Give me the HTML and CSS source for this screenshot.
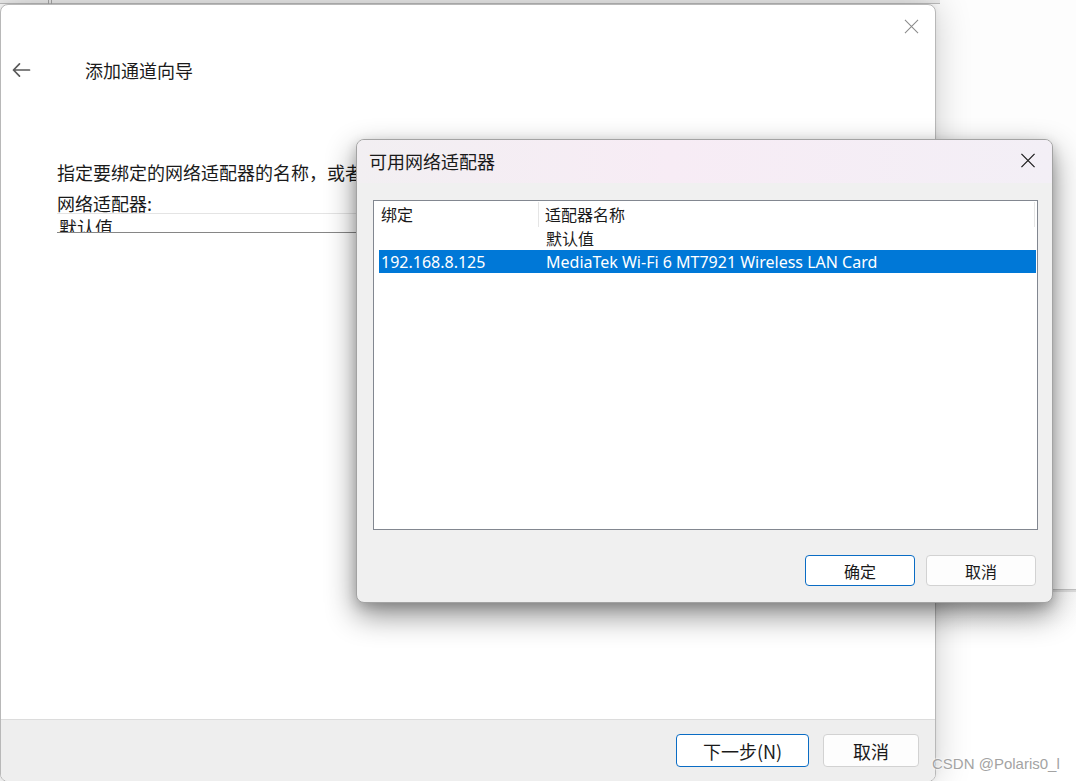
FILE: index.html
```html
<!DOCTYPE html>
<html lang="zh-CN">
<head>
<meta charset="utf-8">
<title>添加通道向导</title>
<link rel="stylesheet" href="styles.css">
</head>
<body>
<div class="desktop">
  <div class="bg-window-top"><span class="bg-tick"></span></div>
  <div class="bg-window-right"></div>

  <section class="wizard">
    <div class="wiz-titlebar">
      <button class="wiz-close" aria-label="关闭">
        <svg width="16" height="16" viewBox="0 0 16 16"><path d="M1 1L15 15M15 1L1 15" stroke="#8a8a8a" stroke-width="1.1" fill="none"/></svg>
      </button>
    </div>
    <div class="wiz-header">
      <span class="wiz-back">
        <svg width="20" height="16" viewBox="0 0 20 16"><path d="M8.5 1.8L2.5 8L8.5 14.2M2.5 8H18.5" stroke="#5a5a5a" stroke-width="1.7" fill="none" stroke-linejoin="round" stroke-linecap="round"/></svg>
      </span>
      <h1 class="wiz-title">添加通道向导</h1>
    </div>
    <div class="wiz-body">
      <p class="wiz-desc">指定要绑定的网络适配器的名称，或者选择默认值以绑定到所有网络适配器。</p>
      <label class="wiz-label">网络适配器:</label>
      <div class="wiz-input">默认值</div>
    </div>
    <div class="wiz-footer">
      <button class="btn btn-primary wiz-btn-next">下一步(N)</button>
      <button class="btn wiz-btn-cancel">取消</button>
    </div>
  </section>

  <section class="dialog">
    <div class="dlg-titlebar">
      <span class="dlg-title">可用网络适配器</span>
      <button class="dlg-close" aria-label="关闭">
        <svg width="16" height="16" viewBox="0 0 16 16"><path d="M1 1L15 15M15 1L1 15" stroke="#1a1a1a" stroke-width="1.3" fill="none"/></svg>
      </button>
    </div>
    <div class="dlg-body">
      <div class="list">
        <div class="list-head">
          <div class="hcell hcell-bind">绑定</div>
          <div class="hcell hcell-name">适配器名称</div>
        </div>
        <div class="list-row">
          <div class="cell cell-bind"></div>
          <div class="cell cell-name cell-cjk">默认值</div>
        </div>
        <div class="list-row selected">
          <div class="cell cell-bind">192.168.8.125</div>
          <div class="cell cell-name">MediaTek Wi-Fi 6 MT7921 Wireless LAN Card</div>
        </div>
      </div>
      <div class="dlg-buttons">
        <button class="btn dlg-btn btn-primary">确定</button>
        <button class="btn dlg-btn">取消</button>
      </div>
    </div>
  </section>

  <div class="watermark">CSDN @Polaris0_l</div>
</div>
</body>
</html>
```

FILE: styles.css
```css
* { box-sizing: border-box; }

html, body {
  margin: 0;
  padding: 0;
  width: 1076px;
  height: 781px;
  overflow: hidden;
  background: #ffffff;
  font-family: "Noto Sans CJK SC", "Noto Sans", sans-serif;
  color: #1a1a1a;
}

.desktop {
  position: relative;
  width: 1076px;
  height: 781px;
  overflow: hidden;
  background: #fdfdfd;
}

/* windows in the background */
.bg-window-top {
  position: absolute;
  left: -10px;
  top: -10px;
  width: 950px;
  height: 14px;
  background: #ececec;
  border-bottom: 1px solid #bdbdbd;
}
.bg-tick {
  position: absolute;
  left: 58px;
  top: 0;
  width: 4px;
  height: 14px;
  border-left: 1px solid #a8a8a8;
  border-right: 1px solid #a8a8a8;
}
.bg-window-right {
  position: absolute;
  left: 900px;
  top: 589px;
  width: 200px;
  height: 220px;
  border-top: 1px solid #c4c4c4;
  background: linear-gradient(to bottom, #f2f2f2 0, #fafafa 3px, #ffffff 40px);
  box-shadow: inset 0 2px 0 #dedede;
}

/* main wizard window */
.wizard {
  position: absolute;
  left: 0;
  top: 4px;
  width: 936px;
  height: 778px;
  background: #ffffff;
  border: 1px solid #b8b8b8;
  border-radius: 8px;
  box-shadow: 0 0 36px rgba(0, 0, 0, 0.2), 0 0 6px rgba(0, 0, 0, 0.06);
  display: flex;
  flex-direction: column;
  overflow: hidden;
}

.wiz-titlebar {
  height: 40px;
  display: flex;
  justify-content: flex-end;
}
.wiz-close {
  width: 46px;
  height: 42px;
  border: 0;
  background: transparent;
  padding: 0;
  display: flex;
  align-items: center;
  justify-content: center;
  margin-right: 1px;
}
.wiz-close svg { width: 15px; height: 15px; }

.wiz-header {
  height: 50px;
  display: flex;
  align-items: center;
}
.wiz-back {
  width: 20px;
  height: 16px;
  margin-left: 10px;
  display: flex;
}
.wiz-title {
  margin: 0 0 0 54px;
  font-size: 18px;
  font-weight: normal;
  line-height: 24px;
  color: #1b1b1b;
}

.wiz-body {
  padding-left: 56px;
  padding-top: 65px;
  display: flex;
  flex-direction: column;
}
.wiz-desc {
  margin: 0;
  font-size: 18px;
  line-height: 24px;
  white-space: nowrap;
  color: #1a1a1a;
}
.wiz-label {
  margin-top: 9px;
  font-size: 18px;
  line-height: 20px;
  color: #1a1a1a;
}
.wiz-input {
  width: 824px;
  height: 20px;
  margin-top: 0;
  border-top: 1px solid #e4e4e4;
  border-bottom: 1px solid #868686;
  padding: 2px 0 0 2px;
  font-size: 18px;
  line-height: 22px;
  overflow: hidden;
  color: #1a1a1a;
}

.wiz-footer {
  margin-top: auto;
  height: 62px;
  background: #eeeeee;
  border-top: 1px solid #dcdcdc;
  display: flex;
  justify-content: flex-end;
  align-items: flex-start;
  padding: 14px 16px 0 0;
  gap: 14px;
}

.btn {
  font-family: "Noto Sans CJK SC", "Noto Sans", sans-serif;
  color: #1a1a1a;
  background: #fdfdfd;
  border: 1px solid #d2d2d2;
  border-radius: 4px;
  padding: 0;
}
.btn-primary {
  border-color: #0a6cc4;
  background: #ffffff;
}
.wiz-btn-next {
  width: 133px;
  height: 33px;
  font-size: 18px;
}
.wiz-btn-cancel {
  width: 96px;
  height: 33px;
  font-size: 18px;
}

/* dialog */
.dialog {
  position: absolute;
  left: 356px;
  top: 139px;
  width: 697px;
  height: 464px;
  background: #f0f0f0;
  border: 1px solid #a3a3a3;
  border-radius: 8px;
  box-shadow: 0 12px 30px rgba(0, 0, 0, 0.46), 0 4px 12px rgba(0, 0, 0, 0.16);
  display: flex;
  flex-direction: column;
  overflow: hidden;
}
.dlg-titlebar {
  height: 43px;
  flex: none;
  display: flex;
  align-items: center;
  padding-left: 12px;
  padding-bottom: 2px;
  background: linear-gradient(to right, #f2eff2 0%, #f7ecf5 45%, #f3eff6 100%);
}
.dlg-title {
  font-size: 18px;
  line-height: 24px;
  color: #1a1a1a;
  flex: 1;
}
.dlg-close {
  width: 48px;
  height: 41px;
  border: 0;
  background: transparent;
  padding: 0;
  display: flex;
  align-items: center;
  justify-content: center;
  margin-right: 0;
}
.dlg-close svg { width: 16px; height: 15px; }

.dlg-body {
  flex: 1;
  padding: 17px 14px 0 16px;
  display: flex;
  flex-direction: column;
}

.list {
  height: 330px;
  background: #ffffff;
  border: 1px solid #828790;
  font-family: "Noto Sans", "Noto Sans CJK SC", sans-serif;
  font-size: 16px;
  color: #1a1a1a;
}
.list-head {
  height: 26px;
  display: flex;
  align-items: stretch;
  padding-top: 1px;
}
.hcell {
  line-height: 24px;
  font-family: "Noto Sans CJK SC", "Noto Sans", sans-serif;
  white-space: nowrap;
}
.hcell-bind {
  width: 165px;
  padding-left: 7px;
  border-right: 1px solid #e5e5e5;
}
.hcell-name {
  flex: 1;
  padding-left: 6px;
  margin-right: 2px;
  border-right: 1px solid #e5e5e5;
}

.list-row {
  height: 23px;
  margin: 0 1px 0 5px;
  display: flex;
  align-items: center;
  white-space: nowrap;
}
.list-row .cell {
  line-height: 23px;
}
.cell-bind {
  width: 165px;
  padding-left: 2px;
}
.cell-name {
  flex: 1;
  padding-left: 2px;
  font-family: "Noto Sans", "Noto Sans CJK SC", sans-serif;
}
.cell-cjk {
  font-family: "Noto Sans CJK SC", sans-serif;
}
.list-row.selected {
  background: #0078d7;
  color: #ffffff;
}
.list-row.selected .cell {
  padding-top: 1px;
}

.dlg-buttons {
  margin-top: 25px;
  display: flex;
  justify-content: flex-end;
  gap: 11px;
  padding-right: 2px;
}
.dlg-btn {
  width: 110px;
  height: 31px;
  font-size: 16px;
}

.watermark {
  position: absolute;
  left: 932px;
  top: 755px;
  font-family: "Liberation Sans", Arial, sans-serif;
  font-size: 15px;
  line-height: 18px;
  color: #a3a3a3;
  text-shadow: 0 0 2px #ffffff, 0 0 2px #ffffff;
  white-space: nowrap;
}
```
